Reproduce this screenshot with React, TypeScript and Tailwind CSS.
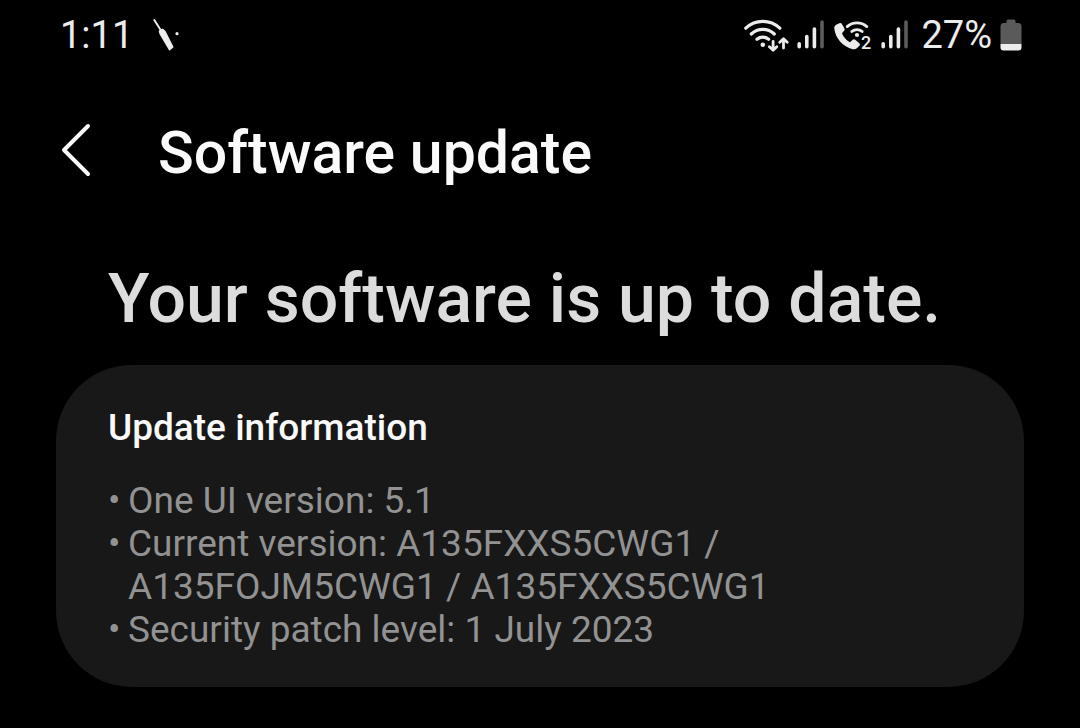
import React from 'react';

interface ISignalBarsProps {
  label: string;
}

const ScrewdriverIcon: React.FC = () => (
  <svg width="28" height="34" viewBox="0 0 28 34" fill="none" stroke="currentColor" aria-hidden="true">
    <path d="M1.3 2 8 12.5" strokeWidth="2" strokeLinecap="round" />
    <path
      d="M6.4 13.2 9.6 11.3 12 13.5 19.8 29 16.6 31.8 7.2 16Z"
      fill="currentColor"
      strokeWidth="1.4"
      strokeLinejoin="round"
    />
    <circle cx="24" cy="15.7" r="1.6" fill="currentColor" stroke="none" />
  </svg>
);

const WifiIcon: React.FC = () => (
  <svg
    width="46"
    height="36"
    viewBox="0 0 46 36"
    fill="none"
    stroke="currentColor"
    strokeWidth="3.2"
    strokeLinecap="round"
    role="img"
    aria-label="Wi-Fi"
  >
    <path d="M2.8 11.2a24.5 24.5 0 0 1 34 0" />
    <path d="M8.3 17a16.5 16.5 0 0 1 23 0" />
    <path d="M14 22.3a9 9 0 0 1 11.6 0" />
    <circle cx="19.8" cy="27.7" r="2.3" fill="currentColor" stroke="none" />
    <path
      d="M30.1 24.5v8.6M26.4 29.8l3.7 3.5 3.7-3.5M40.5 31v-9M36.8 25.2l3.7-3.5 3.7 3.5"
      strokeWidth="2.8"
      strokeLinejoin="round"
    />
  </svg>
);

const SignalBars: React.FC<ISignalBarsProps> = ({ label }) => (
  <svg
    width="28"
    height="30"
    viewBox="0 0 28 30"
    stroke="currentColor"
    strokeWidth="3.6"
    strokeLinecap="round"
    role="img"
    aria-label={label}
  >
    <path d="M2.2 23.7v3M9.8 16.6v10.1M17.4 9v17.7" />
    <path d="M25 2v24.7" stroke="#5c5c5c" />
  </svg>
);

const WifiCallingIcon: React.FC = () => (
  <svg width="44" height="40" viewBox="0 -4 44 40" fill="none" role="img" aria-label="Wi-Fi calling, SIM 2">
    <path
      d="M6.4 4.2 3.6 5.4C1.8 6.2 1.1 7.7 1.3 9.6c1.2 10.2 8.6 18.2 18.4 20.6 1.7.4 3.2.1 4.4-1.1l2.3-2.3c.8-.8.8-1.8-.1-2.6l-4.1-3.4c-.8-.7-1.7-.7-2.5 0l-2.7 2.4C12.9 21 10.4 18 9 14.2l2.1-2.4c.7-.8.7-1.6.2-2.5L8.9 5.1C8.3 4.1 7.5 3.8 6.4 4.2Z"
      fill="currentColor"
    />
    <g stroke="currentColor" strokeWidth="2.8" strokeLinecap="round">
      <path d="M14.2 7.6a14.5 14.5 0 0 1 19.6 0" />
      <path d="M18.8 12.6a7.6 7.6 0 0 1 10.4 0" />
    </g>
    <circle cx="24" cy="16" r="2.1" fill="currentColor" />
    <text x="28" y="30" fill="currentColor" className="font-[Roboto,sans-serif] text-[18px] leading-none font-medium">
      2
    </text>
  </svg>
);

const BatteryIcon: React.FC = () => (
  <svg width="22" height="32" viewBox="0 0 22 32" role="img" aria-label="Battery 27 percent">
    <path
      d="M6.5 4V2A1.5 1.5 0 0 1 8 .5h6A1.5 1.5 0 0 1 15.5 2v2H18a3.5 3.5 0 0 1 3.5 3.5V25H.5V7.5A3.5 3.5 0 0 1 4 4Z"
      fill="#5a5a5a"
    />
    <path d="M.5 25h21v3.5a3 3 0 0 1-3 3h-15a3 3 0 0 1-3-3Z" fill="currentColor" />
  </svg>
);

const StatusBar: React.FC = () => (
  <div className="flex h-[70px] items-center justify-between pr-[58px] pl-15 text-[38px] leading-none text-[#ececec]">
    <div className="flex items-center gap-5">
      <time>1:11</time>
      <ScrewdriverIcon />
    </div>
    <div className="flex items-center">
      <WifiIcon />
      <div className="ml-2">
        <SignalBars label="SIM 1 signal" />
      </div>
      <div className="ml-2">
        <WifiCallingIcon />
      </div>
      <div className="ml-1">
        <SignalBars label="SIM 2 signal" />
      </div>
      <span className="mr-2 ml-3">27%</span>
      <BatteryIcon />
    </div>
  </div>
);

const App: React.FC = () => {
  const details = [
    'One UI version: 5.1',
    'Current version: A135FXXS5CWG1 / A135FOJM5CWG1 / A135FXXS5CWG1',
    'Security patch level: 1 July 2023',
  ];

  return (
    <div className="min-h-screen bg-black pb-10 font-[Roboto,sans-serif]">
      <StatusBar />

      <header className="flex h-41 items-center gap-16 pl-14 text-[#fafafa]">
        <button type="button" aria-label="Back" className="pl-1">
          <svg
            width="34"
            height="60"
            viewBox="0 0 34 60"
            fill="none"
            stroke="currentColor"
            strokeWidth="4"
            strokeLinecap="round"
            strokeLinejoin="round"
          >
            <path d="M32 5 8 29l24 24" transform="translate(-4 -1)" />
          </svg>
        </button>
        <h1 className="text-[59px] leading-none font-medium">Software update</h1>
      </header>

      <main className="px-14">
        <h2 className="px-13 text-[68px] leading-[131px] font-medium text-[#dcdcdc]">
          Your software is up to date.
        </h2>

        <section className="rounded-[76px] bg-[#181818] px-13 pt-[41px] pb-9">
          <h3 className="text-[37px] leading-11 font-medium text-[#fafafa]">Update information</h3>
          <ul className="mt-[29px] max-w-[700px] text-[37px] leading-[43px] text-[#929292]">
            {details.map((detail) => (
              <li key={detail} className="flex">
                <span className="w-5 shrink-0">•</span>
                <span>{detail}</span>
              </li>
            ))}
          </ul>
        </section>
      </main>
    </div>
  );
};

export default App;
